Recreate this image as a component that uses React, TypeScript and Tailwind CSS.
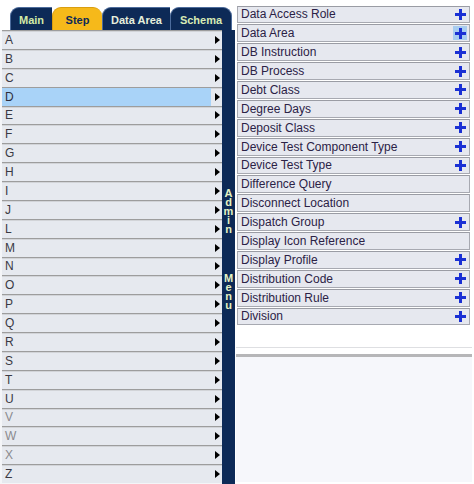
import React from "react";

const letters = [
  "A", "B", "C", "D", "E", "F", "G", "H", "I", "J", "L", "M",
  "N", "O", "P", "Q", "R", "S", "T", "U", "V", "W", "X", "Z",
];
const dimmed = ["V", "W", "X"];

const items: { label: string; add: boolean }[] = [
  { label: "Data Access Role", add: true },
  { label: "Data Area", add: true },
  { label: "DB Instruction", add: true },
  { label: "DB Process", add: true },
  { label: "Debt Class", add: true },
  { label: "Degree Days", add: true },
  { label: "Deposit Class", add: true },
  { label: "Device Test Component Type", add: true },
  { label: "Device Test Type", add: true },
  { label: "Difference Query", add: false },
  { label: "Disconnect Location", add: false },
  { label: "Dispatch Group", add: true },
  { label: "Display Icon Reference", add: false },
  { label: "Display Profile", add: true },
  { label: "Distribution Code", add: true },
  { label: "Distribution Rule", add: true },
  { label: "Division", add: true },
];

function Plus() {
  return (
    <svg width="11" height="11" viewBox="0 0 11 11">
      <rect x="4" y="0" width="3" height="11" fill="#1a30d4" />
      <rect x="0" y="4" width="11" height="3" fill="#1a30d4" />
    </svg>
  );
}

function Tabs() {
  return (
    <div className="flex h-[30px] items-end bg-white pl-[10px] text-[11px] font-bold">
      <div className="flex h-[23px] w-[42px] items-start justify-center rounded-tl-[9px] border-l border-t border-[#4d6c9c] bg-[#0d2a57] pt-[4px] text-[#d3eaa6]">
        Main
      </div>
      <div className="flex h-[23px] w-[50px] items-start justify-center rounded-t-[9px] border-l border-t border-[#d99e10] bg-[#f6b91a] pt-[4px] text-[#0d2a57]">
        Step
      </div>
      <div className="flex h-[23px] w-[68px] items-start justify-center rounded-tl-[9px] border-l border-t border-[#4d6c9c] bg-[#0d2a57] pt-[4px] text-[#e6efdc]">
        Data Area
      </div>
      <div className="flex h-[23px] w-[62px] items-start justify-center rounded-t-[9px] border-l border-r border-t border-[#4d6c9c] bg-[#0d2a57] pt-[4px] text-[#d8ebb4]">
        Schema
      </div>
    </div>
  );
}

function LetterList() {
  return (
    <div className="flex w-[222px] flex-col bg-[#f4f5f8] pl-[2px]">
      {letters.map((l) => (
        <div
          key={l}
          className="flex h-[18.875px] items-stretch border-t border-[#9d9d9d] bg-[#e6e9ef] shadow-[inset_0_1px_0_#d2d4d8]"
        >
          <div
            className={
              l === "D"
                ? "flex w-[209px] items-center bg-[#a9d3f8] pl-[3px] text-[12px] text-[#2d2d3a]"
                : "flex w-[209px] items-center pl-[3px] text-[12px] " +
                  (dimmed.includes(l) ? "text-[#8a8a8e]" : "text-[#3a3a44]")
            }
          >
            {l}
          </div>
          <div className="flex flex-1 items-center pl-[4px]">
            <span className="h-0 w-0 border-y-[4px] border-l-[5px] border-y-transparent border-l-black" />
          </div>
        </div>
      ))}
    </div>
  );
}

function AdminBar() {
  const first = ["A", "d", "m", "i", "n"];
  const second = ["M", "e", "n", "u"];
  return (
    <div className="flex w-[13px] flex-col items-center bg-[#0d2a57] pt-[158.5px] text-[11px] font-bold text-[#e4f2c4]">
      {first.map((c, i) => (
        <div key={"a" + i} className="h-[9px] leading-[9px]">
          {c}
        </div>
      ))}
      <div className="h-[40px]" />
      {second.map((c, i) => (
        <div key={"b" + i} className="h-[9px] leading-[9px]">
          {c}
        </div>
      ))}
    </div>
  );
}

function RightPanel() {
  return (
    <div className="flex w-[236px] flex-col">
      <div className="flex flex-col bg-white pl-[1px] pr-[2px] pt-[5.5px]">
        {items.map((it) => (
          <div
            key={it.label}
            className="mb-[1px] flex h-[17.875px] items-center justify-between border border-[#a7a9b1] border-t-[#9a9ca4] bg-[#e6e8ef] pl-[3px] pr-[2px] text-[12px] text-[#2b2246]"
          >
            <span>{it.label}</span>
            {it.add && (
              <span
                className={
                  it.label === "Data Area"
                    ? "flex h-[14px] w-[14px] items-center justify-center bg-[#a8cdf0]"
                    : "flex h-[14px] w-[14px] items-center justify-center"
                }
              >
                <Plus />
              </span>
            )}
          </div>
        ))}
      </div>
      <div className="h-[21px] bg-white" />
      <div className="h-[1px] bg-[#dedfe2]" />
      <div className="h-[6px] bg-white" />
      <div className="h-[3px] bg-[#b6b6b8]" />
      <div className="h-[125px] bg-[#f6f7fb]" />
    </div>
  );
}

export default function App() {
  return (
    <div className="flex h-[484px] w-[474px] overflow-hidden bg-white font-['Liberation_Sans',Arial,sans-serif]">
      <div className="flex w-[235px] flex-col">
        <Tabs />
        <div className="flex flex-1">
          <LetterList />
          <AdminBar />
        </div>
      </div>
      <div className="pl-[1px]">
        <RightPanel />
      </div>
    </div>
  );
}
